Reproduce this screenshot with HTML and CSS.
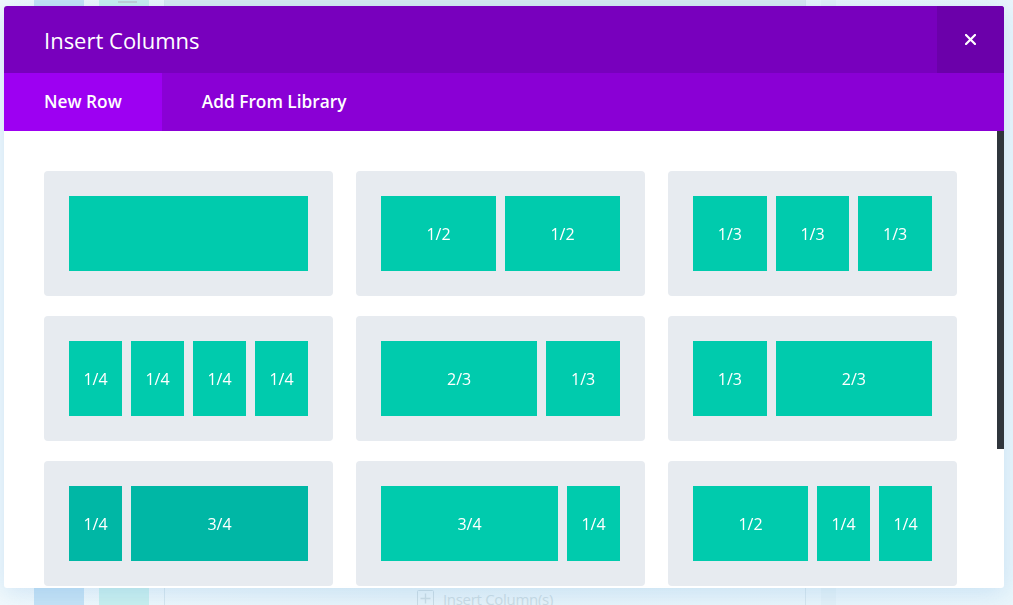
FILE: index.html
```html
<!DOCTYPE html>
<html lang="en">
<head>
<meta charset="utf-8">
<title>Insert Columns</title>
<link rel="stylesheet" href="styles.css">
</head>
<body>
<div class="page">
  <div class="rail rail-blue"></div>
  <div class="rail rail-teal"><span class="handle"></span></div>
  <div class="canvas">
    <div class="canvas-top"></div>
    <div class="insert">
      <svg class="insert-icon" width="17" height="17" viewBox="0 0 17 17" aria-hidden="true">
        <rect x="0.5" y="0.5" width="16" height="16" rx="1" fill="none" stroke="currentColor"/>
        <path d="M8.5 3.5v10M3.5 8.5h10" stroke="currentColor" stroke-width="1.4"/>
      </svg>
      <span>Insert Column(s)</span>
    </div>
  </div>
  <div class="side"><div class="side-strip"></div></div>
</div>

<div class="modal">
  <div class="modal-head">
    <h1 class="modal-title">Insert Columns</h1>
    <button class="modal-close" aria-label="Close">
      <svg width="11" height="11" viewBox="0 0 11 11" aria-hidden="true">
        <path d="M1 1L10 10M10 1L1 10" stroke="#fff" stroke-width="2.2" stroke-linecap="square"/>
      </svg>
    </button>
  </div>
  <div class="modal-tabs">
    <div class="tab is-active">New Row</div>
    <div class="tab">Add From Library</div>
  </div>
  <div class="modal-body">
    <div class="layouts">
      <div class="card"><div class="cols c1"><div class="col"></div></div></div>
      <div class="card"><div class="cols c2"><div class="col">1/2</div><div class="col">1/2</div></div></div>
      <div class="card"><div class="cols c3"><div class="col">1/3</div><div class="col">1/3</div><div class="col">1/3</div></div></div>

      <div class="card"><div class="cols c4"><div class="col">1/4</div><div class="col">1/4</div><div class="col">1/4</div><div class="col">1/4</div></div></div>
      <div class="card"><div class="cols c3"><div class="col w2">2/3</div><div class="col">1/3</div></div></div>
      <div class="card"><div class="cols c3"><div class="col">1/3</div><div class="col w2">2/3</div></div></div>

      <div class="card is-hover"><div class="cols c4"><div class="col">1/4</div><div class="col w3">3/4</div></div></div>
      <div class="card"><div class="cols c4"><div class="col w3">3/4</div><div class="col">1/4</div></div></div>
      <div class="card"><div class="cols c4"><div class="col w2">1/2</div><div class="col">1/4</div><div class="col">1/4</div></div></div>
    </div>
  </div>
  <div class="scroll-thumb"></div>
</div>
</body>
</html>
```

FILE: styles.css
```css
* { box-sizing: border-box; }

html, body {
  margin: 0;
  padding: 0;
}

body {
  width: 1013px;
  height: 605px;
  overflow: hidden;
  font-family: "Open Sans", "Liberation Sans", sans-serif;
  background: #e9f5fa;
}

/* ---------- page behind the modal ---------- */
.page {
  display: flex;
  height: 605px;
  padding-left: 34px;
  background: linear-gradient(90deg, #f1f9fc 0%, #e6f3f9 40%, #eaf6fb 100%);
}

.rail {
  width: 50px;
  flex: none;
  margin-right: 15px;
}
.rail-blue { background: #c5e2f5; }
.rail-teal {
  background: #c9efee;
  display: flex;
  justify-content: center;
}
.handle {
  display: block;
  width: 19px;
  height: 2px;
  margin-top: 1px;
  margin-left: 7px;
  background: #c2d2d6;
}

.canvas {
  width: 642px;
  flex: none;
  border-left: 1px solid #d6e6ee;
  border-right: 1px solid #d6e6ee;
  display: flex;
  flex-direction: column;
  justify-content: space-between;
}
.canvas-top {
  height: 60px;
  background: #d9e9f0;
}
.insert {
  display: flex;
  align-items: flex-start;
  justify-content: center;
  gap: 9px;
  height: 15px;
  color: #cbdce4;
  font-size: 15px;
  line-height: 20px;
  letter-spacing: -0.3px;
}
.insert-icon { flex: none; }
.insert span { margin-top: -1px; }

.side {
  flex: 1;
  padding-left: 15px;
}
.side-strip {
  width: 15px;
  height: 100%;
  background: #e3f1f7;
}

/* ---------- modal ---------- */
.modal {
  position: fixed;
  left: 4px;
  top: 6px;
  width: 1000px;
  height: 582px;
  background: #fff;
  border-radius: 3px;
  overflow: hidden;
  box-shadow: 0 4px 24px rgba(43, 135, 218, 0.18);
  display: flex;
  flex-direction: column;
}

.modal-head {
  flex: none;
  height: 67px;
  background: #7800bd;
  display: flex;
  align-items: center;
  justify-content: space-between;
  padding-left: 40px;
}
.modal-title {
  margin: 0;
  color: #fff;
  font-size: 22px;
  font-weight: 500;
  letter-spacing: 0;
}
.modal-close {
  width: 67px;
  height: 67px;
  border: 0;
  padding: 0;
  background: #6b00aa;
  display: flex;
  align-items: center;
  justify-content: center;
  cursor: pointer;
}

.modal-tabs {
  flex: none;
  height: 58px;
  background: #8a00d5;
  display: flex;
}
.tab {
  padding: 0 40px;
  line-height: 58px;
  color: #fff;
  font-size: 17.3px;
  font-weight: 600;
}
.tab.is-active { background: #9d00f2; }

.modal-body {
  flex: 1;
  overflow: hidden;
  padding: 40px 47px 40px 40px;
}

.layouts {
  display: grid;
  grid-template-columns: repeat(3, 1fr);
  column-gap: 23px;
  row-gap: 20px;
}

.card {
  height: 125px;
  padding: 25px;
  background: #e7ebf0;
  border-radius: 4px;
}

.cols {
  display: grid;
  height: 75px;
  column-gap: 9px;
}
.c1 { grid-template-columns: 1fr; }
.c2 { grid-template-columns: repeat(2, 1fr); }
.c3 { grid-template-columns: repeat(3, 1fr); }
.c4 { grid-template-columns: repeat(4, 1fr); }

.col {
  background: #00cbad;
  color: #fff;
  font-size: 16px;
  display: flex;
  align-items: center;
  justify-content: center;
}
.w2 { grid-column: span 2; }
.w3 { grid-column: span 3; }

.card.is-hover .col { background: #00b7a5; }

.scroll-thumb {
  position: absolute;
  right: 0;
  top: 125px;
  width: 7px;
  height: 318px;
  background: #2f353c;
}
```
